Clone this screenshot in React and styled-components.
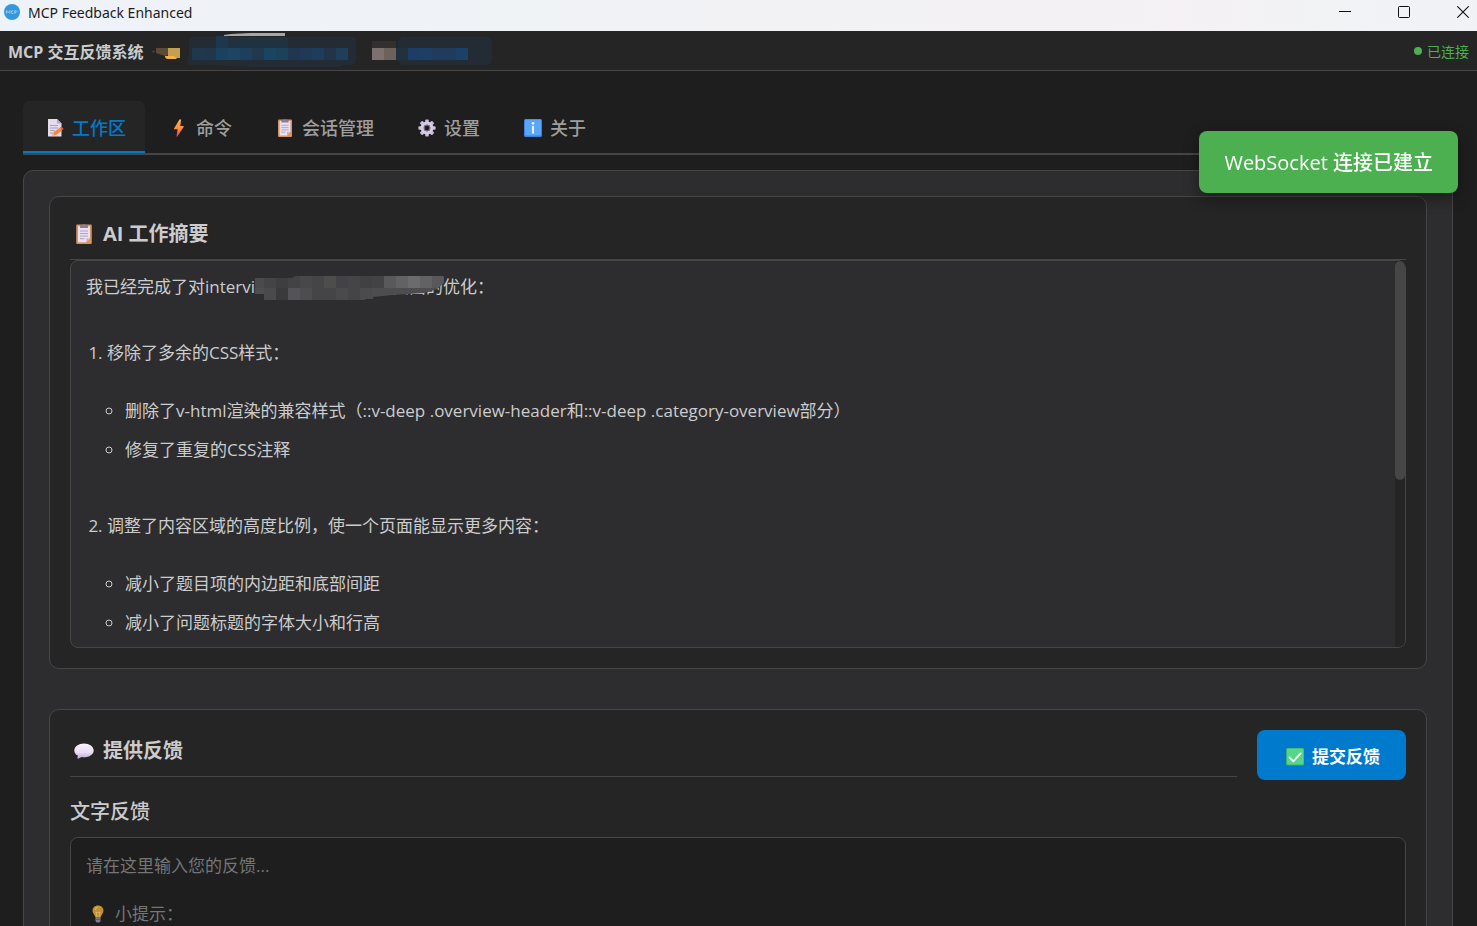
import React from "react";
import styled, { createGlobalStyle } from "styled-components";

const GlobalStyle = createGlobalStyle`
  * { box-sizing: border-box; }
  body {
    margin: 0;
    background: #1e1e1e;
    color: #cccccc;
    font-family: "Open Sans", "Noto Sans CJK SC", sans-serif;
    font-size: 17px;
  }
  button, textarea { font-family: inherit; }
  h1, h2, h3, p, ol, ul { margin: 0; padding: 0; }
`;

const Window = styled.div`
  display: flex;
  flex-direction: column;
  height: 100vh;
  overflow: hidden;
`;

const TitleBar = styled.div`
  flex: none;
  display: flex;
  align-items: center;
  height: 31px;
  padding: 0 8px 7px 4px;
  background: linear-gradient(90deg, #eef3f9 0%, #f0f2f5 40%, #f5f1f4 80%, #f1f3f5 90%, #f0f2f5 100%);
  color: #1b1b1b;
`;

const WindowTitle = styled.div`
  flex: 1;
  margin-left: 8px;
  padding-top: 1px;
  font-family: "Noto Sans", sans-serif;
  font-size: 14px;
  line-height: 20px;
`;

const WindowControls = styled.div`
  display: flex;
  gap: 47px;
`;

const WindowButton = styled.button`
  display: flex;
  padding: 0;
  border: 0;
  background: none;
`;

const StatusHeader = styled.header`
  flex: none;
  display: flex;
  align-items: center;
  justify-content: space-between;
  height: 40px;
  padding: 0 8px;
  background: #252526;
  border-bottom: 1px solid #464647;
`;

const Brand = styled.div`
  display: flex;
  align-items: center;
`;

const BrandName = styled.h1`
  margin-right: 6px;
  padding-top: 2px;
  font-size: 16px;
  font-weight: 700;
  line-height: 24px;
`;

const Connection = styled.div`
  display: flex;
  align-items: center;
  gap: 5px;
  color: #4caf50;
  font-size: 14px;
  line-height: 20px;

  &::before {
    content: "";
    width: 8px;
    height: 8px;
    border-radius: 50%;
    background: #4caf50;
  }
`;

const ConnectionText = styled.span`
  padding-top: 2px;
`;

const Main = styled.main`
  flex: 1;
  min-height: 0;
  overflow: hidden;
  padding: 30px 24px 0 23px;
`;

const Tabs = styled.div`
  display: flex;
  gap: 2px;
  border-bottom: 2px solid #464647;
`;

const Tab = styled.button`
  display: flex;
  align-items: center;
  gap: 5px;
  height: 52px;
  padding: 3px 19px 0;
  border: 0;
  border-bottom: 2px solid ${(p) => (p.$active ? "#007acc" : "transparent")};
  border-radius: 6px 6px 0 0;
  background: ${(p) => (p.$active ? "#252526" : "transparent")};
  color: ${(p) => (p.$active ? "#007acc" : "#9e9e9e")};
  font-size: 18px;
  font-weight: 500;
  line-height: 24px;
`;

const IconSlot = styled.span`
  flex: none;
  display: flex;
  align-items: center;
  justify-content: center;
  width: ${(p) => p.$width}px;
`;

const Panel = styled.section`
  display: flex;
  flex-direction: column;
  gap: 40px;
  margin-top: 15px;
  padding: 25px;
  border: 1px solid #464647;
  border-radius: 10px;
  background: #2d2d30;
`;

const Card = styled.section`
  padding: 20px;
  border: 1px solid #464647;
  border-radius: 10px;
  background: #252526;
`;

const CardHead = styled.div`
  display: flex;
  align-items: center;
  gap: 20px;
`;

const CardTitle = styled.h2`
  flex: 1;
  display: flex;
  align-items: center;
  gap: 5px;
  height: 43px;
  padding-bottom: 8px;
  border-bottom: 1px solid #464647;
  font-size: 20px;
  font-weight: 700;
  line-height: 28px;
`;

const SubmitButton = styled.button`
  display: flex;
  align-items: center;
  justify-content: center;
  gap: 5px;
  width: 149px;
  height: 50px;
  padding: 3px 0 0;
  border: 0;
  border-radius: 8px;
  background: #007acc;
  color: #ffffff;
  font-size: 17px;
  font-weight: 700;
  line-height: 24px;
`;

const SummaryBox = styled.div`
  display: flex;
  height: 388px;
  overflow: hidden;
  border: 1px solid #464647;
  border-radius: 8px;
  background: #2d2d30;
`;

const SummaryText = styled.div`
  flex: 1;
  padding: 12px 15px;
  line-height: 28px;
`;

const ScrollTrack = styled.div`
  width: 10px;
  background: #252526;
`;

const ScrollThumb = styled.div`
  height: 219px;
  border-radius: 5px;
  background: #464647;
`;

const StepList = styled.ol`
  display: flex;
  flex-direction: column;
  gap: 48px;
  margin-top: 38px;
  padding-left: 21px;
`;

const DetailList = styled.ul`
  display: flex;
  flex-direction: column;
  gap: 11px;
  margin-top: 30px;
  padding-left: 18px;
  list-style-type: circle;
`;

const TextMosaic = styled.svg`
  position: relative;
  display: inline-block;
  width: 137px;
  height: 26px;
  overflow: visible;
  vertical-align: middle;
`;

const FieldLabel = styled.label`
  display: block;
  margin: 18px 0 11px;
  font-size: 20px;
  font-weight: 500;
  line-height: 28px;
`;

const FieldWrap = styled.div`
  position: relative;
`;

const FeedbackInput = styled.textarea`
  display: block;
  width: 100%;
  height: 280px;
  padding: 15px;
  border: 1px solid #464647;
  border-radius: 8px;
  background: #1e1e1e;
  color: #cccccc;
  font-size: 17px;
  line-height: 25px;
  resize: none;

  &::placeholder { color: #757575; opacity: 1; }
`;

const FieldHint = styled.div`
  position: absolute;
  top: 64px;
  left: 16px;
  display: flex;
  align-items: center;
  gap: 5px;
  color: #757575;
  line-height: 25px;
  pointer-events: none;
`;

const Toast = styled.div`
  position: fixed;
  top: 131px;
  right: 19px;
  padding: 18px 25px 16px;
  border-radius: 8px;
  background: #4caf50;
  color: #ffffff;
  font-size: 20px;
  font-weight: 500;
  line-height: 28px;
  box-shadow: 0 5px 15px rgba(0, 0, 0, 0.4);
`;

function AppLogo() {
  return (
    <svg width="16" height="16" viewBox="0 0 16 16">
      <circle cx="8" cy="8" r="8" fill="#3498db" />
      <path d="M2.5 9.7V6.6L4.2 8.6 5.9 6.6V9.7M9.4 6.9Q7.2 6.1 7.2 8.1T9.4 9.4M10.8 9.8V6.7H12.2Q13.6 7.5 12.2 8.4H10.8" fill="none" stroke="#a9d5f3" strokeWidth=".8" />
    </svg>
  );
}

function MemoIcon() {
  return (
    <svg width="18" height="18" viewBox="0 0 18 18">
      <path d="M2 0h9l4.500 4.500V17.500H2z" fill="#e4dcec" />
      <path d="M11 0l4.500 4.500h-4.500z" fill="#b3a8c0" />
      <path d="M4 6.500h8M4 9h8M4 11.500h5M4 14h3" stroke="#aaa1b6" strokeWidth="1" />
      <path d="M6 17.200l1-3.500 7.200-5.200 2 2.800L9 16.800z" fill="#fb8637" />
      <path d="M14 8.300l1.400-1 2.300 2.800-1.500 1z" fill="#f5504c" />
      <path d="M6 17.200l1-3.500 2 3.100z" fill="#f9c07d" />
    </svg>
  );
}

function BoltIcon() {
  return (
    <svg width="12" height="18" viewBox="0 0 12 18">
      <defs>
        <linearGradient id="bolt" x1="0" y1="0" x2="0" y2="1">
          <stop offset="0" stopColor="#ffb54a" />
          <stop offset=".55" stopColor="#fd8a42" />
          <stop offset="1" stopColor="#e6404c" />
        </linearGradient>
      </defs>
      <path d="M6.5.5L1 9.5Q.8 10.3 1.6 10.3H4.6L3.5 17.3Q3.7 18 4.3 17.4L10.8 7.8Q11 7 10.2 7H7.3L8.1.8Q7.4-.2 6.5.5z" fill="url(#bolt)" />
    </svg>
  );
}

function ClipboardIcon({ size = 18 }) {
  return (
    <svg width={size} height={size} viewBox="0 0 18 18">
      <rect x="2" y="0.5" width="14" height="17.5" rx="1" fill="#d9935f" />
      <path d="M3.6 2h10.8v10.8L11 16.4H3.6z" fill="#ebe1f2" />
      <path d="M14.4 12.8L11 16.4v-3.6z" fill="#c3b4d0" />
      <path d="M5.4 3.6V1.8Q5.4.8 6.4.8H7.4Q9-.5 10.6.8h1q1 0 1 1v1.8z" fill="#8a7f93" />
      <path d="M5.4 6.3h7.2M5.4 8.6h7.2M5.4 10.9h7.2M5.4 13.2h4" stroke="#ada2b8" strokeWidth=".9" />
    </svg>
  );
}

const TEETH = [0, 45, 90, 135, 180, 225, 270, 315];

function GearIcon() {
  return (
    <svg width="18" height="18" viewBox="0 0 18 18">
      {TEETH.map((angle) => (
        <rect key={angle} x="7.2" y="0.4" width="3.6" height="4.500" rx="1" fill="#cabedb" transform={`rotate(${angle} 9 9)`} />
      ))}
      <circle cx="9" cy="9" r="4.800" fill="none" stroke="#d6cbe4" strokeWidth="3.200" />
      <circle cx="9" cy="9" r="2.900" fill="#1e1e1e" stroke="#7d738c" strokeWidth="1" />
    </svg>
  );
}

function InfoIcon() {
  return (
    <svg width="18" height="18" viewBox="0 0 18 18">
      <rect width="18" height="18" rx="1.5" fill="#3f7fe0" />
      <rect x="1" y="0.6" width="16" height="16" rx="1" fill="#56a6fa" />
      <circle cx="9" cy="4.3" r="1.4" fill="#f1e9ff" />
      <rect x="7.9" y="6.8" width="2.2" height="8" rx="1" fill="#f1e9ff" />
    </svg>
  );
}

function SpeechIcon() {
  return (
    <svg width="20" height="18" viewBox="0 0 20 18">
      <defs>
        <linearGradient id="speech" x1="0" y1="0" x2="0" y2="1">
          <stop offset="0" stopColor="#f8f3fc" />
          <stop offset=".6" stopColor="#e9dcf3" />
          <stop offset="1" stopColor="#bda9d2" />
        </linearGradient>
      </defs>
      <path d="M10 1.5C4.600 1.500.3 4.500.3 8.400c0 2.300 1.300 4 3.400 5.200.2 1-.2 2-.5 2.900 1.700.1 3.200-.7 4.200-1.600.8.200 1.700.3 2.600.3 5.400 0 9.700-3 9.700-6.800S15.400 1.500 10 1.500z" fill="url(#speech)" />
    </svg>
  );
}

function CheckIcon() {
  return (
    <svg width="18" height="18" viewBox="0 0 18 18">
      <rect width="18" height="17.500" rx="1.500" fill="#3fae6e" />
      <rect x="1" y="0.600" width="16.500" height="15.800" rx="1" fill="#57d68a" />
      <path d="M3.500 9.300l3.800 4 7.400-8" fill="none" stroke="#fff" strokeWidth="1.700" strokeLinecap="round" strokeLinejoin="round" />
    </svg>
  );
}

function BulbIcon() {
  return (
    <svg width="12" height="18" viewBox="0 0 12 18">
      <path d="M6 .5C2.800.5.500 2.700.500 5.700c0 2.600 2.300 4 2.900 6.900h5.200c.6-2.900 2.900-4.300 2.900-6.900C11.500 2.700 9.200.5 6 .5z" fill="#bf922f" />
      <path d="M3.500 2.500Q5 1.300 7 1.800 4.500 2.500 3.500 5.500 2.300 4 3.500 2.500z" fill="#d8b55d" />
      <path d="M4.800 12.500L4 7q1 1.500 2 0 1 1.500 2 0l-.8 5.500" fill="none" stroke="#e0bf69" strokeWidth=".8" />
      <path d="M3.500 12.800h5v3.200l-1 1.500h-3l-1-1.500z" fill="#857b8c" />
      <path d="M3.500 14.500h5" stroke="#5d5565" strokeWidth=".8" />
    </svg>
  );
}

const PATH_CELLS = ["#20374d", "#20364a", "#1a4260", "#1b4562", "#1c405c", "#20394d", "#1a4562", "#1c415b", "#20374f", "#1f3957", "#1e3d5c", "#213449", "#1e3f5b"];
const SESSION_CELLS = ["#23303d", "#1c3d66", "#1d3f66", "#203b5c", "#1f3b5e", "#1c4068"];

function HeaderMosaic() {
  return (
    <svg width="344" height="38" viewBox="150 32 344 38">
      <circle cx="153.500" cy="51.500" r="1" fill="#4a4a4a" />
      <path d="M156 39h24v9h-24z" fill="#292523" />
      <path d="M156 48h12v7l-3 1-9-3z" fill="#5b4b37" />
      <path d="M168 48h12v10h-12z" fill="#c39f4e" />
      <path d="M165 56h9l3 3h-9q-3 0-3-3z" fill="#f5b24a" />
      <path d="M190 37h163q4 1 3 5v19q-1 4-5 4h-10v2H250l-40-2h-20q-4-2-3-8l2-3V41z" fill="#232c34" />
      <path d="M216 36h12v12h-12z" fill="#1d384c" />
      <path d="M228 37h60v11h-60z" fill="#20323f" />
      {PATH_CELLS.map((fill, i) => (
        <rect key={i} x={192 + i * 12} y="48" width="12" height="12" fill={fill} />
      ))}
      <path d="M224 36v-1l7-1 19-1h35v3z" fill="#a6a6a6" />
      <path d="M372 41h24v7h-24z" fill="#322f2e" />
      <path d="M372 48h12v12h-12z" fill="#7c7170" />
      <path d="M384 48h12v12h-12z" fill="#6d615b" />
      <path d="M402 37h86q4 1 4 5v20l-4 3h-86l-4-4V41z" fill="#232c34" />
      {SESSION_CELLS.map((fill, i) => (
        <rect key={i} x={396 + i * 12} y="48" width="12" height="12" fill={fill} />
      ))}
    </svg>
  );
}

const UPPER_CELLS = ["#4a4a4c", "#444446", "#3e3e40", "#434345", "#48484a", "#454547", "#4d4d4b", "#434347", "#454549", "#414143", "#434345", "#59595b", "#626264", "#6b6b6d", "#626264", "#58585a"];
const LOWER_CELLS = ["#4a4a4c", "#3a3a3c", "#545458", "#4d4d50", "#454548", "#454547", "#4a4a4a", "#454548", "#4b4b4d"];

function BodyMosaic() {
  return (
    <TextMosaic viewBox="255 275 137 26">
      <defs>
        <clipPath id="stroke-shape">
          <path d="M255 278h37l3-2h148q5 3 2 6l-8 7-12 4-32 2-20 2v2h-8v2H264v-7h-9z" />
        </clipPath>
      </defs>
      <g clipPath="url(#stroke-shape)">
        {UPPER_CELLS.map((fill, i) => (
          <rect key={i} x={252 + i * 12} y="276" width="12" height="12" fill={fill} />
        ))}
        <path d="M252 288h194v12H252z" fill="#4d4d4f" />
        {LOWER_CELLS.map((fill, i) => (
          <rect key={i} x={264 + i * 12} y="288" width="12" height="12" fill={fill} />
        ))}
      </g>
    </TextMosaic>
  );
}

const TABS = [
  { label: "工作区", Icon: MemoIcon },
  { label: "命令", Icon: BoltIcon },
  { label: "会话管理", Icon: ClipboardIcon },
  { label: "设置", Icon: GearIcon },
  { label: "关于", Icon: InfoIcon },
];

const STEPS = [
  {
    title: "移除了多余的CSS样式：",
    details: [
      "删除了v-html渲染的兼容样式（::v-deep .overview-header和::v-deep .category-overview部分）",
      "修复了重复的CSS注释",
    ],
  },
  {
    title: "调整了内容区域的高度比例，使一个页面能显示更多内容：",
    details: ["减小了题目项的内边距和底部间距", "减小了问题标题的字体大小和行高"],
  },
];

export default function App() {
  return (
    <Window>
      <GlobalStyle />
      <TitleBar>
        <AppLogo />
        <WindowTitle>MCP Feedback Enhanced</WindowTitle>
        <WindowControls>
          <WindowButton aria-label="最小化">
            <svg width="12" height="12"><path d="M0 5.500h12" stroke="#111" /></svg>
          </WindowButton>
          <WindowButton aria-label="最大化">
            <svg width="12" height="12"><rect x=".5" y=".5" width="11" height="11" rx="1" fill="none" stroke="#111" /></svg>
          </WindowButton>
          <WindowButton aria-label="关闭">
            <svg width="12" height="12"><path d="M.3.3l11.400 11.400M11.700.3L.3 11.700" stroke="#111" strokeWidth="1.100" /></svg>
          </WindowButton>
        </WindowControls>
      </TitleBar>

      <StatusHeader>
        <Brand>
          <BrandName>MCP 交互反馈系统</BrandName>
          <HeaderMosaic />
        </Brand>
        <Connection>
          <ConnectionText>已连接</ConnectionText>
        </Connection>
      </StatusHeader>

      <Main>
        <Tabs role="tablist">
          {TABS.map(({ label, Icon }, i) => (
            <Tab key={label} role="tab" aria-selected={i === 0} $active={i === 0}>
              <IconSlot $width={25}><Icon /></IconSlot>
              {label}
            </Tab>
          ))}
        </Tabs>

        <Panel>
          <Card>
            <CardTitle>
              <IconSlot $width={28}><ClipboardIcon size={20} /></IconSlot>
              AI 工作摘要
            </CardTitle>
            <SummaryBox>
              <SummaryText>
                <p>我已经完成了对intervi<BodyMosaic />页面的优化：</p>
                <StepList>
                  {STEPS.map((step) => (
                    <li key={step.title}>
                      <p>{step.title}</p>
                      <DetailList>
                        {step.details.map((detail) => (
                          <li key={detail}>{detail}</li>
                        ))}
                      </DetailList>
                    </li>
                  ))}
                </StepList>
              </SummaryText>
              <ScrollTrack><ScrollThumb /></ScrollTrack>
            </SummaryBox>
          </Card>

          <Card>
            <CardHead>
              <CardTitle>
                <IconSlot $width={28}><SpeechIcon /></IconSlot>
                提供反馈
              </CardTitle>
              <SubmitButton>
                <IconSlot $width={24}><CheckIcon /></IconSlot>
                提交反馈
              </SubmitButton>
            </CardHead>
            <FieldLabel htmlFor="feedback">文字反馈</FieldLabel>
            <FieldWrap>
              <FeedbackInput id="feedback" placeholder="请在这里输入您的反馈..." />
              <FieldHint>
                <IconSlot $width={24}><BulbIcon /></IconSlot>
                小提示：
              </FieldHint>
            </FieldWrap>
          </Card>
        </Panel>
      </Main>

      <Toast role="status">WebSocket 连接已建立</Toast>
    </Window>
  );
}
